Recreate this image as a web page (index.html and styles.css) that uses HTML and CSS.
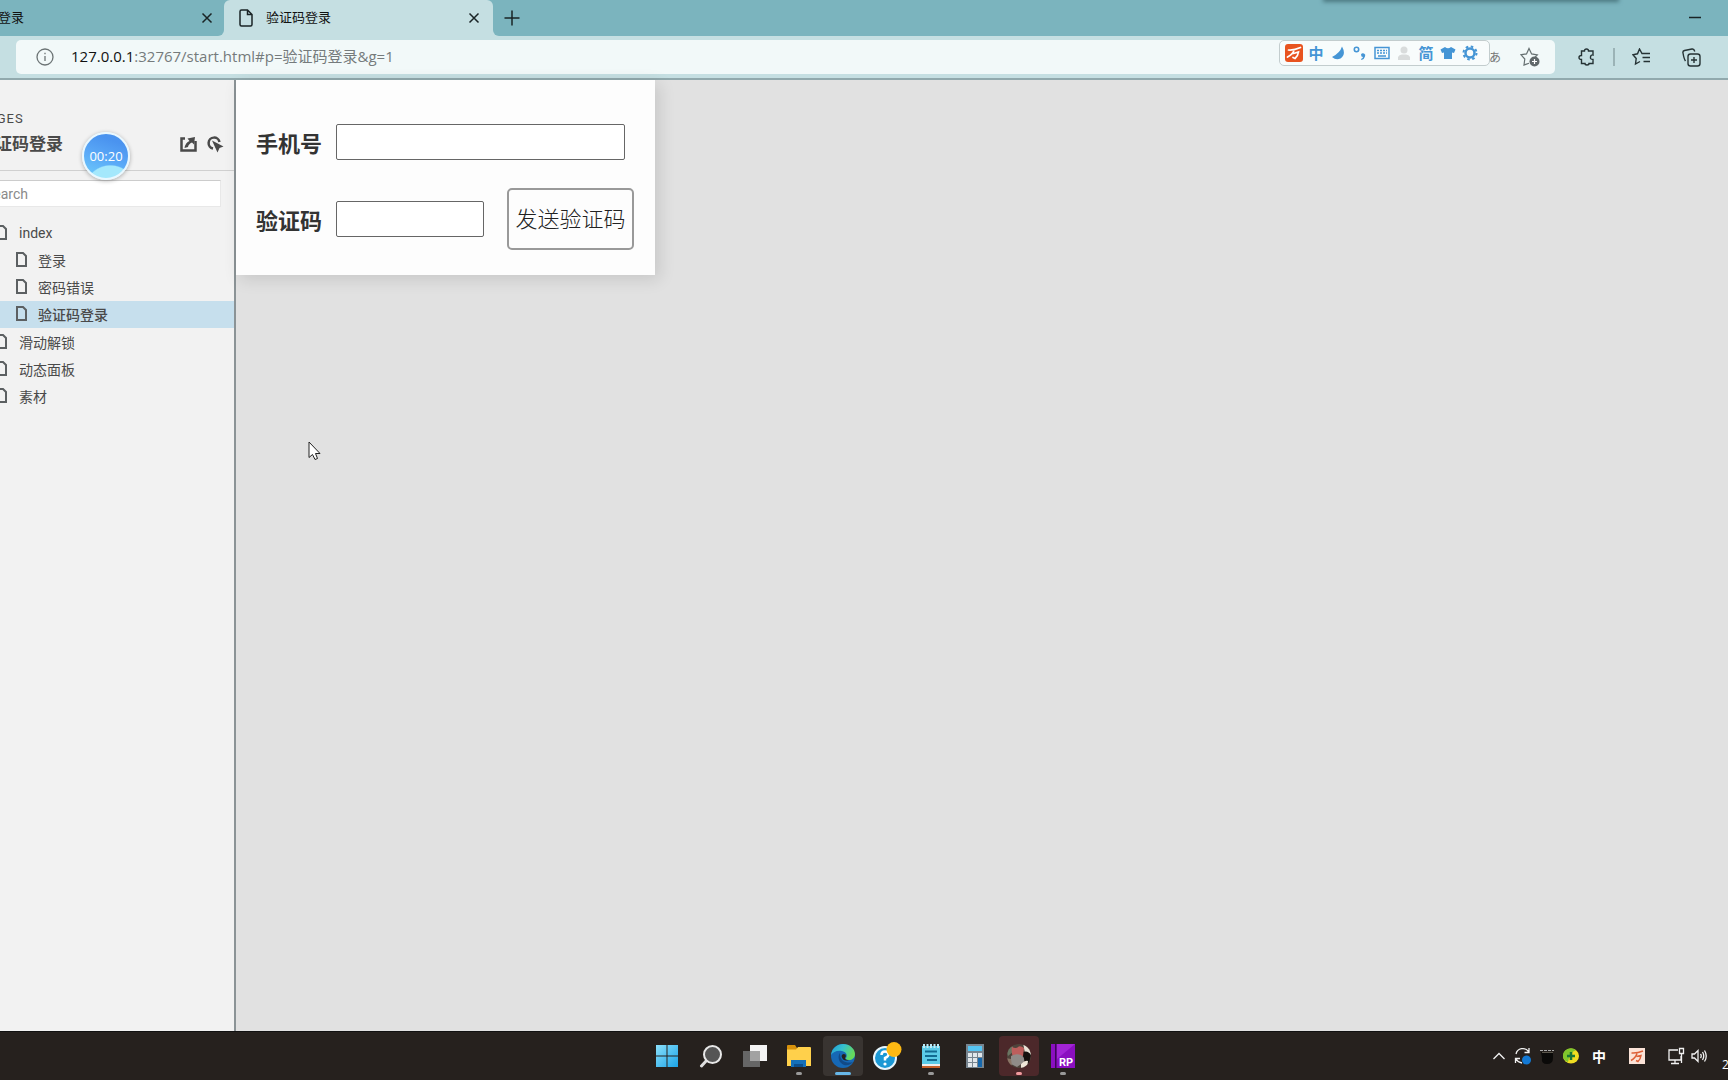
FILE: index.html
```html
<!DOCTYPE html>
<html lang="zh-CN">
<head>
    <meta charset="UTF-8">
    <meta name="viewport" content="width=device-width, initial-scale=1">
    <title>验证码登录</title>
    <link rel="stylesheet" href="styles.css">
</head>
<body>

<header class="browser">
    <div class="tabs">
        <div class="tab tab-back">
            <span class="tab-title">登录</span>
            <button type="button" class="tab-close" aria-label="关闭标签页">
                <svg width="12" height="12" viewBox="0 0 12 12"><path d="M1.5 1.5l9 9M10.5 1.5l-9 9"/></svg>
            </button>
        </div>
        <div class="tab tab-active">
            <svg class="tab-icon" width="14" height="18" viewBox="0 0 14 18"><path d="M1 2.5Q1 1 2.5 1H8.500L13 5.500V15.500Q13 17 11.500 17H2.500Q1 17 1 15.500ZM8.500 1V5.500H13"/></svg>
            <span class="tab-title">验证码登录</span>
            <button type="button" class="tab-close" aria-label="关闭标签页">
                <svg width="12" height="12" viewBox="0 0 12 12"><path d="M1.5 1.5l9 9M10.5 1.5l-9 9"/></svg>
            </button>
        </div>
        <button type="button" class="tab-new" aria-label="新建标签页">
            <svg width="16" height="16" viewBox="0 0 16 16"><path d="M8 0.500v15M0.500 8h15"/></svg>
        </button>
        <button type="button" class="minimize" aria-label="最小化">
            <svg width="12" height="12" viewBox="0 0 12 12"><path d="M0 5.500h12"/></svg>
        </button>
    </div>

    <div class="toolbar">
        <div class="address">
            <svg class="info" width="18" height="18" viewBox="0 0 18 18"><circle cx="9" cy="9" r="8"/><path d="M9 8v5M9 4.800v1.500"/></svg>
            <div class="url" role="textbox" aria-label="地址栏" contenteditable="true" spellcheck="false"><span class="host">127.0.0.1</span>:32767/start.html#p=验证码登录&amp;g=1</div>
            <span class="translate">あ</span>
            <button type="button" class="favorite" aria-label="收藏">
                <svg width="20" height="20" viewBox="0 0 20 20"><path d="M9 16.200L4 18l.8-6L1 7.800l5.500-.9L9 1.500l2.600 5.400 5.700.9-2.500 2.500"/><circle class="badge" cx="14.500" cy="14.500" r="5"/><path class="badge-plus" d="M14.500 12v5M12 14.500h5"/></svg>
            </button>
            <!-- input method bar floats over the address field -->
            <div class="ime">
                <span><svg width="18" height="18" viewBox="0 0 18 18"><rect width="18" height="18" rx="3" fill="#e8531f"/><path d="M3.500 6Q9 6.500 15.500 3.500M9 6.500Q7.500 10.500 2.500 13M8.500 9.500L13.500 8Q13 12 10 14.500L8 13.500" fill="none" stroke="#fff" stroke-width="1.700" stroke-linecap="round"/></svg></span>
                <span>中</span>
                <span><svg width="14" height="14" viewBox="0 0 14 14"><path d="M11 0.500Q9 7 1 11Q5 14.500 9.500 12.500Q15.500 8.500 11 .5Z"/></svg></span>
                <span><svg width="14" height="14" viewBox="0 0 14 14"><circle cx="3.500" cy="3.500" r="2.200" fill="none" stroke="#4595d5" stroke-width="1.600"/><path d="M8 8.500a2.200 2.200 0 1 1 4 2Q11.500 13 8.500 14L8 13Q10 12 10 11Q8 11 8 8.500Z"/></svg></span>
                <span><svg width="16" height="14" viewBox="0 0 16 14"><path d="M1 1.500h14v11H1z" fill="none" stroke="#4595d5" stroke-width="1.500"/><path d="M3 4.500h10M3 7h10" stroke="#4595d5" stroke-width="1.500" stroke-dasharray="2 1"/><path d="M4 10h8" stroke="#4595d5" stroke-width="1.500"/></svg></span>
                <span><svg width="12" height="14" viewBox="0 0 12 14"><g fill="#d9dcdc"><circle cx="6" cy="4" r="3.500"/><path d="M0 14V11Q1 8.500 4 8.500H8Q11 8.500 12 11V14Z"/></g></svg></span>
                <span>简</span>
                <span><svg width="16" height="14" viewBox="0 0 16 14"><path d="M5 1Q8 3.500 11 1L15.500 3.500L14 7L12 6.500V13H4V6.500L2 7L.5 3.500Z"/></svg></span>
                <span><svg width="16" height="16" viewBox="0 0 16 16"><circle cx="8" cy="8" r="4.500" fill="none" stroke="#4595d5" stroke-width="2.500"/><circle cx="8" cy="8" r="6.500" fill="none" stroke="#4595d5" stroke-width="2" stroke-dasharray="2.550 2.550"/></svg></span>
            </div>
        </div>
        <button type="button" class="tool" aria-label="扩展">
            <svg width="18" height="18" viewBox="0 0 18 18"><path d="M3.500 3H6.500Q6.500 1 8.500 1T10.500 3H15V7Q13 6.500 12.500 9T15 11.500V15.500H11Q11 17 9 17T7 15.500H3.500V11.500Q1 11.500 1 9.500T3.500 7.500Z"/></svg>
        </button>
        <span class="divider"></span>
        <button type="button" class="tool" aria-label="收藏夹">
            <svg width="19" height="18" viewBox="0 0 19 18"><path d="M12 5.500H10L7.500 1 5.500 5.800 1 6.800l3.200 3.700L3.500 16l4.500-2.500M11.500 5.500H18M10.500 9.500H18M11.500 13.500H18"/></svg>
        </button>
        <button type="button" class="tool tool-last" aria-label="集锦">
            <svg width="19" height="19" viewBox="0 0 19 19"><rect x="6" y="6" width="12" height="12" rx="2.500"/><path d="M12 9v6M9 12h6M3.500 13Q2 11 1 5Q.5 3 2.500 2.500L10 1Q12 .6 12.800 3.500"/></svg>
        </button>
    </div>
    <div class="top-shadow"></div>
</header>

<div class="content">
    <aside class="sidebar">
        <div class="pages-head">
            <div class="pages-label">PAGES</div>
            <div class="pages-row">
                <h1>验证码登录</h1>
                <button type="button" aria-label="分享">
                    <svg width="17" height="15" viewBox="0 0 17 15"><path d="M5 1.500H1.500V13.500H15.500V4" fill="none" stroke="#4a4a4a" stroke-width="2.500"/><path d="M4.500 11Q5.500 5.500 9.500 4L7.500 1.500L15 0L14 7.500L12 5.500Q8.500 7 8 10Z" fill="#4a4a4a"/></svg>
                </button>
                <button type="button" aria-label="交互">
                    <svg width="17" height="17" viewBox="0 0 17 17"><path d="M12.500 6A5.500 5.500 0 1 0 6 12.500" fill="none" stroke="#4a4a4a" stroke-width="2.500"/><path d="M5 4.500L16.500 10.500L12.500 12L10.500 16.500Z" fill="#4a4a4a"/></svg>
                </button>
            </div>
        </div>
        <input class="search" type="search" placeholder="Search" aria-label="Search">
        <ul class="tree">
            <li><a href="#index"><svg class="doc" width="11" height="15" viewBox="0 0 11 15"><path d="M1 1H7L10 4V14H1Z"/></svg>index</a>
                <ul>
                    <li><a href="#login"><svg class="doc" width="11" height="15" viewBox="0 0 11 15"><path d="M1 1H7L10 4V14H1Z"/></svg>登录</a></li>
                    <li><a href="#error"><svg class="doc" width="11" height="15" viewBox="0 0 11 15"><path d="M1 1H7L10 4V14H1Z"/></svg>密码错误</a></li>
                    <li><a href="#code" class="selected"><svg class="doc" width="11" height="15" viewBox="0 0 11 15"><path d="M1 1H7L10 4V14H1Z"/></svg>验证码登录</a></li>
                </ul>
            </li>
            <li><a href="#slide"><svg class="doc" width="11" height="15" viewBox="0 0 11 15"><path d="M1 1H7L10 4V14H1Z"/></svg>滑动解锁</a></li>
            <li><a href="#panel"><svg class="doc" width="11" height="15" viewBox="0 0 11 15"><path d="M1 1H7L10 4V14H1Z"/></svg>动态面板</a></li>
            <li><a href="#assets"><svg class="doc" width="11" height="15" viewBox="0 0 11 15"><path d="M1 1H7L10 4V14H1Z"/></svg>素材</a></li>
        </ul>
        <div class="timer">00:20</div>
    </aside>

    <main class="canvas">
        <form class="login">
            <div class="field">
                <label for="phone">手机号</label>
                <input type="tel" id="phone">
            </div>
            <div class="field">
                <label for="code">验证码</label>
                <input type="text" id="code" class="short">
                <button type="button" class="send">发送验证码</button>
            </div>
        </form>
        <svg class="cursor" width="13" height="20" viewBox="0 0 13 20"><path d="M1 1V16.500L4.500 13.500L7 18.500L9.500 17.500L7.500 12.500H12Z" fill="#fff" stroke="#222"/></svg>
    </main>
</div>

<footer class="taskbar">
    <div class="apps">
        <button type="button" aria-label="开始">
            <svg width="24" height="24" viewBox="0 0 24 24"><defs><linearGradient id="win" x2="1" y2="1"><stop stop-color="#8be0fb"/><stop offset="1" stop-color="#1ba4e8"/></linearGradient></defs><path d="M1 1h10.500v10.500H1zM12.500 1H23v10.500H12.500zM1 12.500h10.500V23H1zM12.500 12.500H23V23H12.500z" fill="url(#win)"/></svg>
        </button>
        <button type="button" aria-label="搜索">
            <svg width="24" height="24" viewBox="0 0 24 24"><path d="M8 16L2.500 22" stroke="#ddd" stroke-width="3" stroke-linecap="round"/><circle cx="13.500" cy="10.500" r="8.500" fill="#555" stroke="#e8e8e8" stroke-width="2"/></svg>
        </button>
        <button type="button" aria-label="任务视图">
            <svg width="26" height="24" viewBox="0 0 26 24"><path d="M8 1h17v16H8z" fill="#f4f4f4"/><path d="M1 7h17v16H1z" fill="#666"/><path d="M8 7h10v10H8z" fill="#a2a2a2"/></svg>
        </button>
        <button type="button" class="running" aria-label="文件资源管理器">
            <svg width="26" height="24" viewBox="0 0 26 24"><path d="M1 2Q1 1 2 1h7l2 3v3H1z" fill="#d8920c"/><path d="M1 5.500h9l2-2.500h12q1 0 1 1v18H1z" fill="#ffd04b"/><path d="M5 16h15v7H5z" fill="#146fb8"/><path d="M8 20h9v3H8z" fill="#0b4e8c"/></svg>
        </button>
        <button type="button" class="current" aria-label="Microsoft Edge">
            <svg width="26" height="26" viewBox="0 0 26 26"><defs><linearGradient id="edge1" x2="1" y2=".4"><stop stop-color="#229bd5"/><stop offset=".5" stop-color="#35c1cf"/><stop offset="1" stop-color="#66d95b"/></linearGradient></defs><circle cx="13" cy="13" r="12" fill="#1668b5"/><path d="M1 12C2 5 7 1 13 1c7 0 12 5 12 10 0 4-3 6-6 6-3 0-4-1-3-2 2-3 0-6-4-7C7 7 3 9 1 12Z" fill="url(#edge1)"/><path d="M10 10c-3 4-1 10 4 12 4 1 7-1 9-3-3 1-8 1-11-2-2-2-2-5-2-7Z" fill="#124a87"/><path d="M11.500 13q1-3 4-1.500 1 1.500-.5 3.500 0 2 4 2-6 2-7.500-4Z" fill="#26201d"/></svg>
        </button>
        <button type="button" aria-label="帮助">
            <svg width="30" height="30" viewBox="0 0 30 30"><circle cx="13" cy="17" r="11" fill="#1b98d5" stroke="#e8f6fd" stroke-width="2"/><path d="M9.500 14Q9.500 10.500 13 10.500T16.500 13.500Q16.500 15.500 13 17V19.500" fill="none" stroke="#fff" stroke-width="2.500"/><circle cx="13" cy="23" r="1.600" fill="#fff"/><circle cx="22" cy="8.500" r="7.500" fill="#fdb913"/></svg>
        </button>
        <button type="button" class="running" aria-label="记事本">
            <svg width="20" height="26" viewBox="0 0 20 26"><path d="M1 3h18v19H1z" fill="#5ccbe8"/><path d="M1 22h18v3H1z" fill="#c6602a"/><path d="M1 21h18v2H1z" fill="#eee"/><path d="M4 8.500h12M4 13h12M6 17h10" stroke="#126a91" stroke-width="2"/><path d="M2 3h16" stroke="#bceaf6" stroke-width="4" stroke-dasharray="2 1.500"/></svg>
        </button>
        <button type="button" aria-label="计算器">
            <svg width="20" height="26" viewBox="0 0 20 26"><path d="M1 1h18v24H1z" fill="#778590"/><path d="M3 3h14v5H3z" fill="#55c5f3"/><path d="M3 10h4v4H3zM8 10h4v4H8zM3 15h4v4H3zM8 15h4v4H8zM3 20h4v4H3zM8 20h4v4H8zM13 10h4v4h-4z" fill="#e2e7eb"/><path d="M13 15h4v9h-4z" fill="#1669ae"/></svg>
        </button>
        <button type="button" class="alert" aria-label="用户">
            <svg width="26" height="26" viewBox="0 0 26 26"><defs><clipPath id="face"><circle cx="13" cy="13" r="12"/></clipPath></defs><g clip-path="url(#face)"><path d="M0 0h26v26H0z" fill="#4e433b"/><path d="M17 0h9v13l-7-3z" fill="#e9e2d6"/><path d="M17 9q5-2 8 3l-2 8-6-3z" fill="#17120f"/><path d="M0 6l6-4 2 6-6 5z" fill="#6a7562"/><path d="M6 4q4 2 6 0t6 1l-1 8-10 1q-2-5-1-10z" fill="#bd5e5c"/><path d="M5 13q5-3 10-1 4 2 3 7l-7 5-6-3z" fill="#908b88"/><path d="M0 15l5 1 1 7-5-2z" fill="#8a7465"/><path d="M15 21q4-4 7-3l-1 6-6 2z" fill="#efe6d8"/></g></svg>
        </button>
        <button type="button" class="running" aria-label="Axure RP">
            <svg width="26" height="26" viewBox="0 0 26 26"><path d="M1 1h24v24H1z" fill="#8a0fc0"/><path d="M7 1h18L7 16z" fill="#a224d6"/><path d="M5 1h1.500v24H5z" fill="#3d0659"/><text x="9" y="23" class="rp">RP</text></svg>
        </button>
    </div>

    <div class="tray">
        <button type="button" aria-label="显示隐藏的图标">
            <svg width="14" height="10" viewBox="0 0 14 10"><path d="M1.500 8L7 2.500L12.500 8" class="line"/></svg>
        </button>
        <button type="button" aria-label="同步">
            <svg width="18" height="18" viewBox="0 0 18 18"><path d="M2 7A7 7 0 0 1 14.500 4.500M15 1V5.500H10.500M1.500 16V11.500H6M2 12Q4 15.500 8 16" class="line"/><circle cx="12.500" cy="13" r="4.500" fill="#1379d4"/></svg>
        </button>
        <button type="button" aria-label="QQ">
            <svg width="16" height="18" viewBox="0 0 16 18"><path d="M2 5h12v6q0 6-6 6t-5-6z" fill="#0b0a09"/><path d="M1 3.500h14" stroke="#aaa" stroke-dasharray="3 1"/><path d="M3 5.500h11" stroke="#5b564c"/></svg>
        </button>
        <button type="button" aria-label="安全卫士">
            <svg width="18" height="18" viewBox="0 0 18 18"><ellipse cx="9" cy="9" rx="8" ry="7.500" fill="#f0dd22"/><path d="M1 9A8 7.500 0 0 1 14 3Q8 5 6 15Q1 13 1 9Z" fill="#7fc52d"/><path d="M9 5v8M5 9h8" stroke="#187537" stroke-width="2.500"/></svg>
        </button>
        <button type="button" class="lang">中</button>
        <button type="button" class="wan" aria-label="输入法">
            <svg width="16" height="16" viewBox="0 0 16 16"><path d="M0 0h16v16H0z" fill="#fbe3d8"/><path d="M2.500 5Q8 5.500 14 3M8 5.500Q6.500 10 2 12.500M7.500 8.500L12 7.500Q11.500 11 9 13.500L7 12.500" fill="none" stroke="#dd6038" stroke-width="1.500"/></svg>
        </button>
        <button type="button" class="net" aria-label="网络和音量">
            <svg width="18" height="18" viewBox="0 0 18 18"><path d="M11 3H2V13H14V9M8 13V16.500M4 16.500H12M12.500 1.500H16.500V6.500H12.500ZM14.500 6.500V16" class="line"/></svg>
            <svg width="16" height="16" viewBox="0 0 16 16"><path d="M1 6H3.500L7 2.500V13.500L3.500 10H1ZM9.500 6Q11 8 9.500 10M11.500 4Q14 8 11.500 12M13.500 2.500Q17 8 13.500 13.500" class="line"/></svg>
        </button>
        <span class="clock">2</span>
    </div>
</footer>

</body>
</html>
```
FILE: styles.css
```css
* {
    box-sizing: border-box;
}

html, body {
    width: 100%;
    height: 100%;
}

body {
    display: flex;
    flex-direction: column;
    margin: 0;
    overflow: hidden;
    font-family: "Open Sans", "Noto Sans CJK SC", sans-serif;
    font-size: 13px;
    color: #333;
}

button {
    display: flex;
    align-items: center;
    justify-content: center;
    padding: 0;
    border: 0;
    background: none;
    font-family: inherit;
    color: inherit;
}

svg {
    flex: none;
    display: block;
}

/* browser */
.browser {
    position: relative;
    flex: none;
    background: #c5dfe2;
    border-bottom: 2px solid #91a9ad;
}

.tabs {
    display: flex;
    height: 36px;
    background: #c5dfe2;
    color: #111;
}

.tabs svg {
    fill: none;
    stroke: #1a2426;
    stroke-width: 1.5;
}

.tab {
    display: flex;
    align-items: center;
    flex: none;
}

.tab-title {
    flex: 1;
    padding-bottom: 2px;
    font-size: 13px;
    line-height: 20px;
    white-space: nowrap;
}

.tab-close {
    width: 12px;
    height: 36px;
}

.tab-back {
    width: 224px;
    padding-right: 11px;
    background: #7bb4be;
    border-radius: 0 0 6px 0;
}

.tab-back .tab-title {
    margin-left: -2px;
}

.tab-active {
    width: 269px;
    padding: 0 13px 0 15px;
    background: #c5dfe2;
    border-radius: 6px 6px 0 0;
    box-shadow: 0 -6px 0 #7bb4be;
}

.tab-active .tab-title {
    margin-left: 13px;
}

.tab-new {
    width: 38px;
    background: #7bb4be;
    border-radius: 0 0 0 6px;
}

.tabs .minimize {
    flex: 1;
    justify-content: flex-end;
    padding-right: 27px;
    background: #7bb4be;
}

.toolbar {
    display: flex;
    align-items: center;
    height: 42px;
    padding: 0 27px 0 16px;
}

.address {
    position: relative;
    display: flex;
    align-items: center;
    flex: 1;
    height: 34px;
    padding: 0 15px 0 20px;
    background: #f2f9f9;
    border-radius: 5px;
}

.info {
    fill: none;
    stroke: #6c7475;
    stroke-width: 1.3;
}

.url {
    flex: 1;
    margin-left: 17px;
    padding-bottom: 2px;
    font-size: 15px;
    line-height: 22px;
    color: #757b7c;
    white-space: nowrap;
    outline: none;
}

.host {
    color: #111;
}

.translate {
    margin-right: 19px;
    font-size: 12px;
    color: #777;
}

.favorite svg {
    fill: none;
    stroke: #667071;
    stroke-width: 1.2;
}

.favorite .badge {
    fill: #60686a;
    stroke: none;
}

.favorite .badge-plus {
    stroke: #fff;
}

.ime {
    position: absolute;
    top: 0;
    right: 65px;
    display: flex;
    align-items: center;
    width: 211px;
    height: 26px;
    padding: 0 8px 0 3px;
    background: #f8fcfc;
    border: 1px solid #c3cdce;
    border-radius: 5px;
    color: #4595d5;
    font-size: 15px;
    font-weight: bold;
    line-height: 22px;
}

.ime span {
    display: flex;
    align-items: center;
    justify-content: center;
    width: 22px;
    height: 24px;
}

.ime svg {
    fill: #4595d5;
}

.tool {
    width: 20px;
    height: 34px;
    margin-left: 22px;
}

.tool svg {
    fill: none;
    stroke: #253234;
    stroke-width: 1.4;
}

.divider {
    width: 2px;
    height: 18px;
    margin: 0 -6px 0 16px;
    background: #9bb3b6;
}

.tool-last {
    margin-left: 30px;
}

/* edge of the recorder window above the screen */
.top-shadow {
    position: absolute;
    top: -4px;
    right: 110px;
    width: 294px;
    height: 4px;
    box-shadow: 0 1px 4px 1px #4b7880;
}

/* page */
.content {
    display: flex;
    flex: 1;
    min-height: 0;
}

.sidebar {
    position: relative;
    flex: none;
    width: 236px;
    border-right: 2px solid #8b9396;
    background: #f2f2f2;
    color: #4a4a4a;
    overflow: hidden;
}

.pages-head {
    height: 91px;
    padding: 30px 10px 0 0;
    border-bottom: 1px solid #d0d0d0;
}

.pages-label {
    margin-left: -21px;
    font-family: Roboto, sans-serif;
    font-size: 13px;
    line-height: 18px;
    letter-spacing: 1px;
}

.pages-row {
    display: flex;
    align-items: center;
    gap: 10px;
    height: 32px;
}

.pages-row h1 {
    flex: 1;
    margin: 0 0 0 -22px;
    font-size: 17px;
    line-height: 24px;
}

.search {
    display: block;
    width: 245px;
    height: 27px;
    margin: 9px 0 0 -24px;
    padding: 0 8px;
    border: 1px solid #e8e8e8;
    border-top-color: #ccc;
    background: #fff;
    font-family: Roboto, sans-serif;
    font-size: 14px;
}

.search::placeholder {
    color: #8a8a8a;
}

.tree, .tree ul {
    margin: 0;
    padding: 0;
    list-style: none;
}

.tree {
    margin-top: 13px;
}

.tree ul {
    margin-bottom: 1px;
}

.tree a {
    display: flex;
    align-items: center;
    gap: 12px;
    height: 27px;
    margin-left: -4px;
    padding-bottom: 2px;
    font-family: Roboto, "Noto Sans CJK SC", sans-serif;
    font-size: 14px;
    color: #4a4a4a;
    text-decoration: none;
}

.tree ul a {
    margin-left: 0;
    padding-left: 16px;
}

.tree ul a {
    gap: 11px;
}

.tree .selected {
    background: #c6dfed;
    font-weight: 500;
}

.doc {
    fill: none;
    stroke: #5c6062;
    stroke-width: 2;
}

.timer {
    position: absolute;
    top: 52px;
    left: 82px;
    width: 48px;
    height: 48px;
    border: 2px solid #e9f8ff;
    border-radius: 50%;
    background: radial-gradient(circle at 60% 130%, #a4e8fc 40%, transparent 42%), linear-gradient(200deg, #4a93ef 20%, #5aa9f7 55%, #6fcefb);
    box-shadow: 0 1px 4px rgba(0, 0, 0, .3);
    font-size: 13px;
    line-height: 44px;
    text-align: center;
    color: #fff;
}

.canvas {
    position: relative;
    flex: 1;
    background: #e1e1e1;
}

.login {
    display: flex;
    flex-direction: column;
    gap: 28px;
    width: 419px;
    padding: 44px 19px 25px 20px;
    background: #fdfdfd;
    box-shadow: 4px 4px 16px rgba(0, 0, 0, .12);
}

.field {
    display: flex;
    align-items: center;
}

.field label {
    width: 80px;
    padding-top: 2px;
    font-size: 22px;
    font-weight: bold;
    line-height: 32px;
}

.field input {
    width: 289px;
    height: 36px;
    padding: 0 8px;
    border: 1px solid #666;
    border-radius: 2px;
    background: #fff;
    font-size: 20px;
}

.field .short {
    width: 148px;
}

.send {
    width: 127px;
    height: 62px;
    margin-left: 23px;
    padding-bottom: 4px;
    border: 2px solid #999;
    border-radius: 5px;
    font-size: 22px;
    font-weight: 300;
    color: #222;
    white-space: nowrap;
}

.cursor {
    position: absolute;
    top: 361px;
    left: 72px;
}

/* taskbar */
.taskbar {
    display: grid;
    grid-template-columns: 1fr auto 1fr;
    flex: none;
    height: 49px;
    background: #26211e;
    border-top: 1px solid #111;
    color: #fff;
}

.apps {
    grid-column: 2;
    display: flex;
    align-items: center;
    gap: 4px;
    padding-left: 2px;
}

.apps button {
    position: relative;
    width: 40px;
    height: 40px;
    border-radius: 4px;
}

.apps .current {
    background: #393431;
}

.apps .alert {
    background: #4c282a;
}

.running::after, .current::after, .alert::after {
    content: "";
    position: absolute;
    bottom: 1px;
    left: 17px;
    width: 6px;
    height: 3px;
    border-radius: 2px;
    background: #999;
}

.current::after {
    left: 12px;
    width: 16px;
    background: #67b7e8;
}

.alert::after {
    background: #f09a9e;
}

.rp {
    font-family: Roboto, sans-serif;
    font-size: 11px;
    font-weight: bold;
    fill: #fff;
}

.tray {
    display: flex;
    align-items: center;
    justify-content: flex-end;
    overflow: hidden;
}

.tray button {
    width: 24px;
    height: 40px;
}

.tray .line {
    fill: none;
    stroke: #f2f2f2;
    stroke-width: 1.3;
}

.tray .lang {
    width: 32px;
    font-size: 14px;
    font-weight: bold;
}

.tray .wan {
    width: 44px;
}

.tray .net {
    gap: 6px;
    width: 56px;
    margin-right: 7px;
}

.clock {
    width: 6px;
    padding-top: 16px;
    font-size: 12px;
    white-space: nowrap;
}
```
